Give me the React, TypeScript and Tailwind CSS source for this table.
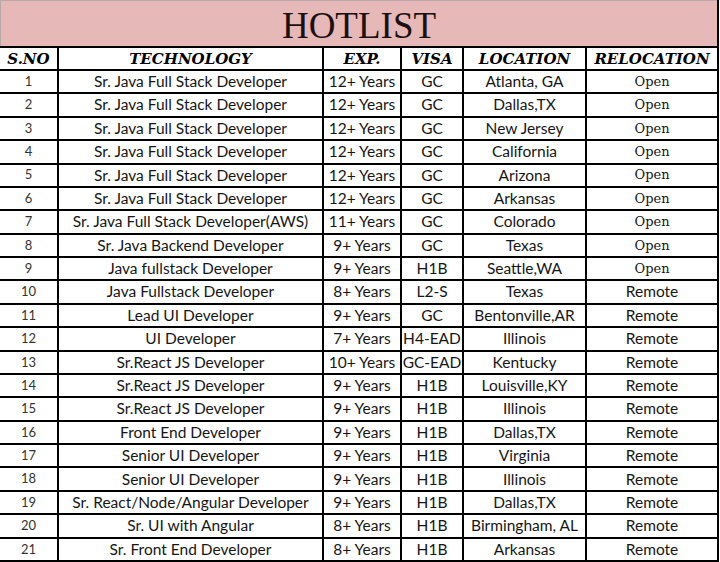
const rows: [string, string, string, string, string][] = [
  ['Sr. Java Full Stack Developer', '12+ Years', 'GC', 'Atlanta, GA', 'Open'],
  ['Sr. Java Full Stack Developer', '12+ Years', 'GC', 'Dallas,TX', 'Open'],
  ['Sr. Java Full Stack Developer', '12+ Years', 'GC', 'New Jersey', 'Open'],
  ['Sr. Java Full Stack Developer', '12+ Years', 'GC', 'California', 'Open'],
  ['Sr. Java Full Stack Developer', '12+ Years', 'GC', 'Arizona', 'Open'],
  ['Sr. Java Full Stack Developer', '12+ Years', 'GC', 'Arkansas', 'Open'],
  ['Sr. Java Full Stack Developer(AWS)', '11+ Years', 'GC', 'Colorado', 'Open'],
  ['Sr. Java Backend Developer', '9+ Years', 'GC', 'Texas', 'Open'],
  ['Java fullstack Developer', '9+ Years', 'H1B', 'Seattle,WA', 'Open'],
  ['Java Fullstack Developer', '8+ Years', 'L2-S', 'Texas', 'Remote'],
  ['Lead UI Developer', '9+ Years', 'GC', 'Bentonville,AR', 'Remote'],
  ['UI Developer', '7+ Years', 'H4-EAD', 'Illinois', 'Remote'],
  ['Sr.React JS Developer', '10+ Years', 'GC-EAD', 'Kentucky', 'Remote'],
  ['Sr.React JS Developer', '9+ Years', 'H1B', 'Louisville,KY', 'Remote'],
  ['Sr.React JS Developer', '9+ Years', 'H1B', 'Illinois', 'Remote'],
  ['Front End Developer', '9+ Years', 'H1B', 'Dallas,TX', 'Remote'],
  ['Senior UI Developer', '9+ Years', 'H1B', 'Virginia', 'Remote'],
  ['Senior UI Developer', '9+ Years', 'H1B', 'Illinois', 'Remote'],
  ['Sr. React/Node/Angular Developer', '9+ Years', 'H1B', 'Dallas,TX', 'Remote'],
  ['Sr. UI with Angular', '8+ Years', 'H1B', 'Birmingham, AL', 'Remote'],
  ['Sr. Front End Developer', '8+ Years', 'H1B', 'Arkansas', 'Remote'],
]

const headers = ['S.NO', 'TECHNOLOGY', 'EXP.', 'VISA', 'LOCATION', 'RELOCATION']

const sans = "font-['Lato','Liberation_Sans',sans-serif]"
const cell = 'flex items-center justify-center border-t-2 border-black whitespace-nowrap overflow-hidden'

export default function App() {
  return (
    <div className="w-[720px] h-[562px] bg-white overflow-hidden">
      <div className="w-[719px] border-r-2 border-black">
        <div className="h-[46px] bg-[#e6b8b8] flex items-center justify-center border-l border-t border-[#b8a8a8]">
          <h1 className="font-['Liberation_Serif',serif] text-[37px] leading-none text-[#1c1010] pt-1">HOTLIST</h1>
        </div>
        <div className="grid grid-cols-[57px_265px_78px_62px_123px_132px] grid-rows-[23px_repeat(21,minmax(0,1fr))] h-[516px] border-b-2 border-black text-[#161616]">
          {headers.map((h, i) => (
            <div
              key={h}
              className={`${cell} ${i > 0 ? 'border-l-2' : ''} font-['DejaVu_Serif',serif] font-bold italic text-[15px] text-black pt-0.5`}
            >
              {h}
            </div>
          ))}
          {rows.map((r, idx) => (
            <div key={idx} className="contents">
              <div className={`${cell} ${sans} text-[13px] text-[#333]`}>{idx + 1}</div>
              <div className={`${cell} border-l-2 ${sans} text-[15.5px]`}>{r[0]}</div>
              <div className={`${cell} border-l-2 ${sans} text-[15.5px]`}>{r[1]}</div>
              <div className={`${cell} border-l-2 ${sans} text-[15.5px]`}>{r[2]}</div>
              <div className={`${cell} border-l-2 ${sans} text-[15.5px]`}>{r[3]}</div>
              <div
                className={`${cell} border-l-2 ${
                  r[4] === 'Open' ? "font-['DejaVu_Serif',serif] text-[13px]" : `${sans} text-[15.5px]`
                }`}
              >
                {r[4]}
              </div>
            </div>
          ))}
        </div>
      </div>
    </div>
  )
}
